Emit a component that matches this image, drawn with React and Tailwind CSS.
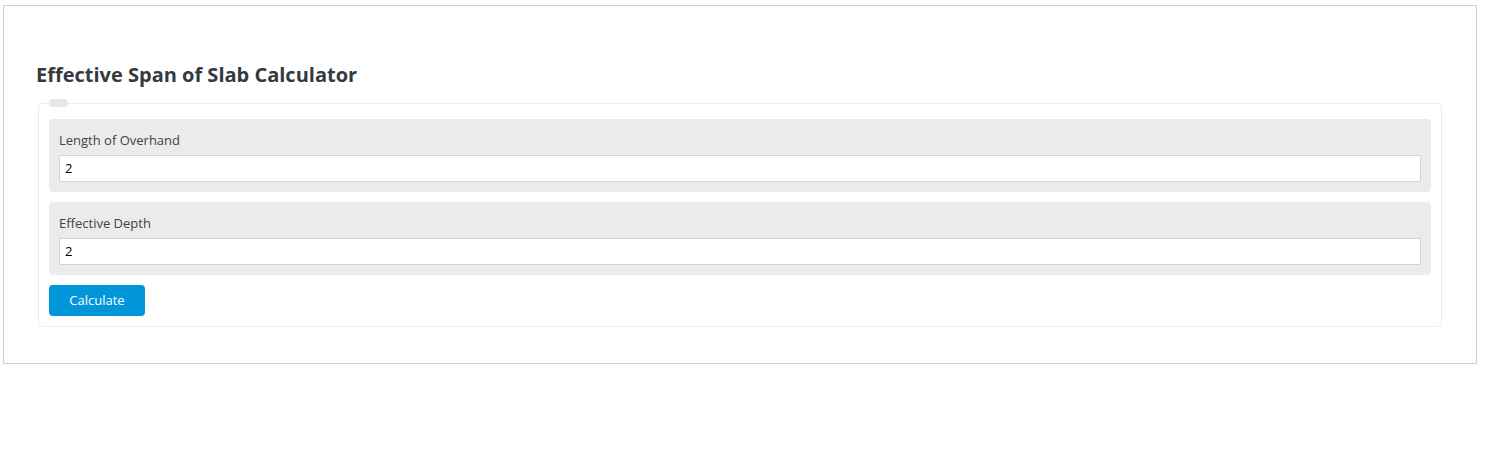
import React from 'react';

function Field({ label, value }) {
  return (
    <div className="bg-[#eaebea] rounded-[4px] px-[10px] pt-[11px] pb-[10px]">
      <label className="block text-[13px] leading-[20px] mb-[5px] text-[#444]">{label}</label>
      <input
        type="text"
        defaultValue={value}
        className="block w-full h-[27px] px-[5px] pb-[1px] text-[13px] text-black bg-white border border-[#d4d4d4] outline-none"
      />
    </div>
  );
}

export default function App() {
  return (
    <div className="pt-[5px] pl-[3px] bg-white" style={{ fontFamily: '"Open Sans", "Noto Sans", sans-serif' }}>
      <div className="w-[1474px] h-[359px] border border-[#cfcfcf] px-[34px] pt-[54px]">
        <h1 className="text-[20px] leading-[30px] font-bold text-[#343a40] mb-[13px] -ml-[2px]">
          Effective Span of Slab Calculator
        </h1>
        <div className="relative border border-[#ececec] rounded-[4px] px-[10px] pt-[15px] pb-[10px]">
          <div className="absolute -top-[5px] left-[10px] w-[19px] h-[8px] rounded-full bg-[#e6e7e7]" />
          <div className="flex flex-col gap-[10px]">
            <Field label="Length of Overhand" value="2" />
            <Field label="Effective Depth" value="2" />
            <div>
              <button className="w-[96px] h-[31px] rounded-[4px] bg-[#0096d9] text-white text-[13px]">
                Calculate
              </button>
            </div>
          </div>
        </div>
      </div>
    </div>
  );
}
